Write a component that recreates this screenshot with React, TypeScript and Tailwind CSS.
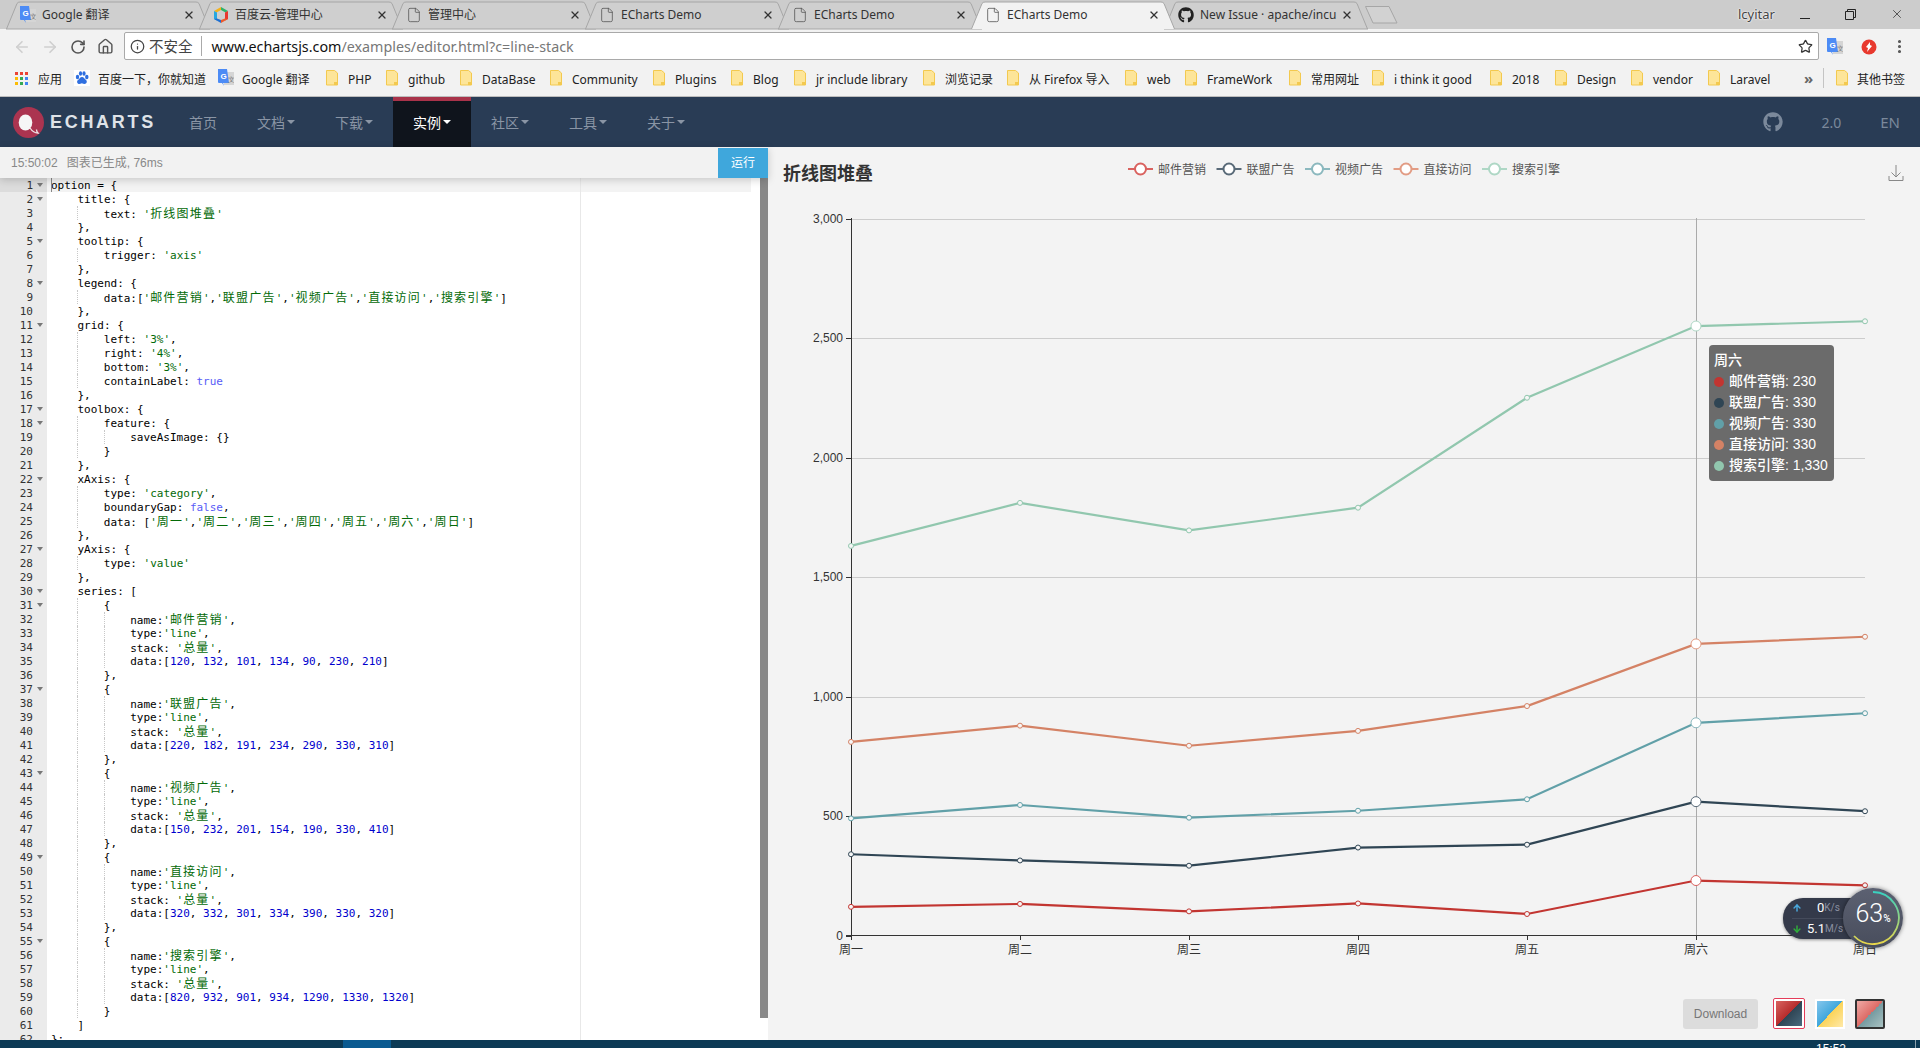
import { ArrowDown, ArrowLeft, ArrowRight, ArrowUp, File, Home, Info, MoreVertical, RotateCw, Star, X } from "lucide-react";
import { FaGithub } from "react-icons/fa";

const SANS = "font-['Noto_Sans','Noto_Sans_CJK_SC',sans-serif]";

const tabs = [
  { title: "Google 翻译", icon: "translate" },
  { title: "百度云-管理中心", icon: "cloud" },
  { title: "管理中心", icon: "file" },
  { title: "ECharts Demo", icon: "file" },
  { title: "ECharts Demo", icon: "file" },
  { title: "ECharts Demo", icon: "file", active: true },
  { title: "New Issue · apache/incu", icon: "github" },
];

const bookmarks = [
  { label: "PHP", cls: "w-[60px]" },
  { label: "github", cls: "w-[74px]" },
  { label: "DataBase", cls: "w-[90px]" },
  { label: "Community", cls: "w-[103px]" },
  { label: "Plugins", cls: "w-[78px]" },
  { label: "Blog", cls: "w-[63px]" },
  { label: "jr include library", cls: "w-[129px]" },
  { label: "浏览记录", cls: "w-[84px]" },
  { label: "从 Firefox 导入", cls: "w-[118px]" },
  { label: "web", cls: "w-[60px]" },
  { label: "FrameWork", cls: "w-[104px]" },
  { label: "常用网址", cls: "w-[83px]" },
  { label: "i think it good", cls: "w-[118px]" },
  { label: "2018", cls: "w-[65px]" },
  { label: "Design", cls: "w-[76px]" },
  { label: "vendor", cls: "w-[77px]" },
  { label: "Laravel", cls: "w-[96px]" },
];

const navItems = [
  { label: "文档" },
  { label: "下载" },
  { label: "实例", active: true },
  { label: "社区" },
  { label: "工具" },
  { label: "关于" },
];

const code = `option = {
    title: {
        text: '折线图堆叠'
    },
    tooltip: {
        trigger: 'axis'
    },
    legend: {
        data:['邮件营销','联盟广告','视频广告','直接访问','搜索引擎']
    },
    grid: {
        left: '3%',
        right: '4%',
        bottom: '3%',
        containLabel: true
    },
    toolbox: {
        feature: {
            saveAsImage: {}
        }
    },
    xAxis: {
        type: 'category',
        boundaryGap: false,
        data: ['周一','周二','周三','周四','周五','周六','周日']
    },
    yAxis: {
        type: 'value'
    },
    series: [
        {
            name:'邮件营销',
            type:'line',
            stack: '总量',
            data:[120, 132, 101, 134, 90, 230, 210]
        },
        {
            name:'联盟广告',
            type:'line',
            stack: '总量',
            data:[220, 182, 191, 234, 290, 330, 310]
        },
        {
            name:'视频广告',
            type:'line',
            stack: '总量',
            data:[150, 232, 201, 154, 190, 330, 410]
        },
        {
            name:'直接访问',
            type:'line',
            stack: '总量',
            data:[320, 332, 301, 334, 390, 330, 320]
        },
        {
            name:'搜索引擎',
            type:'line',
            stack: '总量',
            data:[820, 932, 901, 934, 1290, 1330, 1320]
        }
    ]
};`.split("\n");

const foldLines = [1, 2, 5, 8, 11, 17, 18, 22, 27, 30, 31, 37, 43, 49, 55];

const series = [
  { name: "邮件营销", color: "#c23531", faded: "#d9625f", values: [120, 132, 101, 134, 90, 230, 210], tip: "230" },
  { name: "联盟广告", color: "#2f4554", faded: "#596a78", values: [220, 182, 191, 234, 290, 330, 310], tip: "330" },
  { name: "视频广告", color: "#61a0a8", faded: "#8bb8be", values: [150, 232, 201, 154, 190, 330, 410], tip: "330" },
  { name: "直接访问", color: "#d48265", faded: "#e29c84", values: [320, 332, 301, 334, 390, 330, 320], tip: "330" },
  { name: "搜索引擎", color: "#91c7ae", faded: "#aed7c5", values: [820, 932, 901, 934, 1290, 1330, 1320], tip: "1,330" },
];

const days = ["周一", "周二", "周三", "周四", "周五", "周六", "周日"];
const ticks = [0, 500, 1000, 1500, 2000, 2500, 3000];

const xOf = (i: number) => 851 + i * 169;
const yOf = (v: number) => 935.5 - v * 0.239;

// stacked totals for each series
const stacked = series.map((s, idx) =>
  s.values.map((_, i) => series.slice(0, idx + 1).reduce((sum, row) => sum + row.values[i], 0))
);

function TranslateIcon() {
  return (
    <svg width="16" height="18" viewBox="0 0 16 18" className="shrink-0">
      <rect x="6" y="3" width="10" height="13" fill="#d5d5d5" />
      <path d="M0 0h9l2 14H5l1 3-2-3H1a1 1 0 0 1-1-1z" fill="#4c8bf5" />
      <text x="2.5" y="9.5" fontSize="8" fontWeight="700" fill="#fff" fontFamily="Liberation Sans">G</text>
      <text x="10" y="13" fontSize="7" fill="#777" fontFamily="Liberation Sans">文</text>
    </svg>
  );
}

function CloudIcon() {
  return (
    <svg width="16" height="18" viewBox="0 0 16 18" className="shrink-0">
      <path d="M8 1 15 5 12.5 6.5 8 4z" fill="#2fb36a" />
      <path d="M8 1 1 5 3.5 6.5 8 4z" fill="#f5b21a" />
      <path d="M1 5v8l3 1.5V6.5z" fill="#27a8e0" />
      <path d="M15 5v8l-3 1.5V6.5z" fill="#e8382f" />
      <path d="M1 13l7 4v-3l-4-1.5z" fill="#1f6fd1" />
      <path d="M15 13l-7 4v-3l4-1.5z" fill="#ec5a2c" />
    </svg>
  );
}

function Folder() {
  return (
    <svg width="12" height="16" viewBox="0 0 12 16" className="shrink-0">
      <path d="M.5.5h8l3 2.5v12H.5z" fill="#fde599" stroke="#f3c94f" />
      <rect x="8" y="12" width="3" height="3" fill="#f3c94f" />
    </svg>
  );
}

function AppsIcon() {
  const colors = ["#ea4335", "#ea4335", "#ea4335", "#fbbc05", "#34a853", "#4285f4", "#fbbc05", "#34a853", "#4285f4"];
  return (
    <div className="grid w-[13px] grid-cols-3 gap-[2px]">
      {colors.map((c, i) => (
        <svg key={i} width="3" height="3">
          <rect width="3" height="3" fill={c} />
        </svg>
      ))}
    </div>
  );
}

function BaiduIcon() {
  return (
    <svg width="16" height="16" viewBox="0 0 16 16" className="shrink-0">
      <rect width="16" height="16" fill="#fff" />
      <g fill="#2f6fe0">
        <ellipse cx="3.5" cy="7" rx="1.7" ry="2.2" />
        <ellipse cx="6.5" cy="3.5" rx="1.6" ry="2.2" />
        <ellipse cx="10" cy="3.5" rx="1.6" ry="2.2" />
        <ellipse cx="12.8" cy="7" rx="1.7" ry="2.2" />
        <path d="M8 7c2 0 2.5 2 4 3s.8 4-1.500 4-2.500-.7-2.500-.7-1 .7-2.800.7-3-2.500-1.200-4S6 7 8 7z" />
      </g>
    </svg>
  );
}

function Tab(props: { title: string; icon: string; active?: boolean; first: boolean }) {
  return (
    <div className={`relative flex h-[28px] w-[204px] shrink-0 items-center pl-[14px] pr-[15px] ${props.first ? "" : "-ml-[11px]"} ${props.active ? "z-10" : ""}`}>
      <svg width="204" height="29" viewBox="0 0 204 29" className="absolute left-0 top-0">
        <path
          d="M.5 28 11 2.500Q12 1 14 1H190q2 0 3 1.500L203.500 28"
          fill={props.active ? "#f2f2f2" : "#cfcfcf"}
          stroke="#a6a6a6"
        />
        {!props.active && <path d="M0 28H204" stroke="#a6a6a6" />}
      </svg>
      <div className="relative flex w-[22px] shrink-0 justify-start">
        {props.icon === "translate" && <TranslateIcon />}
        {props.icon === "cloud" && <CloudIcon />}
        {props.icon === "file" && <File size={16} strokeWidth={1.2} className="text-[#555]" />}
        {props.icon === "github" && <FaGithub size={16} className="text-[#222]" />}
      </div>
      <span className={`relative min-w-0 flex-1 overflow-hidden whitespace-nowrap text-[12px] text-[#333] ${SANS}`}>{props.title}</span>
      <X size={12} strokeWidth={2.6} className="relative ml-[2px] shrink-0 text-[#333]" />
    </div>
  );
}

function TabStrip() {
  return (
    <div className="relative flex h-[29px] items-end bg-[#cccccc]">
      <div className="flex h-[28px] pl-[6px]">
        {tabs.map((tab, i) => (
          <Tab key={i} first={i === 0} title={tab.title} icon={tab.icon} active={tab.active} />
        ))}
      </div>
      <svg width="36" height="20" viewBox="0 0 36 20" className="-ml-[3px] mb-[4px] shrink-0">
        <path d="M.5 1.500H24l8 16.500H8z" fill="#d2d2d2" stroke="#a6a6a6" strokeLinejoin="round" />
      </svg>
      <span className={`ml-[337px] mb-[5px] w-[42px] text-[13px] text-[#444] [text-shadow:0_0_2px_#fff,0_0_2px_#fff] ${SANS}`}>lcyitar</span>
      <div className="mb-[10px] ml-[20px] h-px w-[10px] bg-[#222]" />
      <svg width="11" height="11" viewBox="0 0 11 11" className="mb-[9px] ml-[35px]">
        <path d="M.5 2.500h8v8h-8zM2.500 2.500v-2h8v8h-2" fill="none" stroke="#222" />
      </svg>
      <X size={14} strokeWidth={1.2} className="mb-[8px] ml-[34px] text-[#222]" />
    </div>
  );
}

function AddressBar() {
  return (
    <div className="flex h-[31px] items-end bg-[#f2f2f2]">
      <div className="flex h-[27px] w-[124px] items-center pl-[13px]">
        <ArrowLeft size={18} strokeWidth={2.2} className="text-[#cfcfcf]" />
        <ArrowRight size={18} strokeWidth={2.2} className="ml-[10px] text-[#cfcfcf]" />
        <RotateCw size={16} strokeWidth={2.4} className="ml-[11px] text-[#555]" />
        <Home size={17} strokeWidth={2} className="ml-[11px] text-[#555]" />
      </div>
      <div className={`flex h-[28px] w-[1695px] items-center rounded-[2px] border border-[#a9a9a9] bg-white pl-[5px] pr-[5px] ${SANS}`}>
        <Info size={15} strokeWidth={2} className="text-[#444]" />
        <span className="ml-[4px] pt-px text-[14.500px] text-[#444]">不安全</span>
        <div className="ml-[8px] mr-[10px] h-[20px] w-px bg-[#aaa]" />
        <span className="whitespace-nowrap pt-px text-[14.300px] text-[#111]">
          www.echartsjs.com<span className="text-[#777]">/examples/editor.html?c=line-stack</span>
        </span>
        <Star size={15} strokeWidth={2} className="ml-auto text-[#333]" />
      </div>
      <div className="flex h-[27px] flex-1 items-center pl-[8px]">
        <TranslateIcon />
        <svg width="16" height="16" viewBox="0 0 16 16" className="ml-[18px]">
          <circle cx="8" cy="8" r="7.500" fill="#e8392e" />
          <path d="M9 3 5 8l2 1-1 4 5-6-2-1z" fill="#fff" />
        </svg>
        <MoreVertical size={17} strokeWidth={2.4} className="ml-[14px] text-[#555]" />
      </div>
    </div>
  );
}

function BookmarkBar() {
  return (
    <div className={`flex h-[37px] items-center border-b border-[#bdbdbd] bg-[#f2f2f2] pl-[15px] text-[12px] text-[#222] ${SANS}`}>
      <div className="flex w-[59px] items-center gap-[10px]">
        <AppsIcon />
        <span className="pt-[3px]">应用</span>
      </div>
      <div className="flex w-[144px] items-center gap-[8px]">
        <BaiduIcon />
        <span className="whitespace-nowrap pt-[3px]">百度一下，你就知道</span>
      </div>
      <div className="flex w-[108px] items-center gap-[8px]">
        <TranslateIcon />
        <span className="whitespace-nowrap pt-[3px]">Google 翻译</span>
      </div>
      {bookmarks.map((b) => (
        <div key={b.label} className={`flex shrink-0 items-center gap-[10px] ${b.cls}`}>
          <Folder />
          <span className="whitespace-nowrap pt-[3px]">{b.label}</span>
        </div>
      ))}
      <span className="w-[19px] pt-[1px] text-[15px] font-bold text-[#666]">»</span>
      <div className="h-[20px] w-px bg-[#c4c4c4]" />
      <div className="ml-[12px] flex items-center gap-[9px]">
        <Folder />
        <span className="whitespace-nowrap pt-[3px]">其他书签</span>
      </div>
    </div>
  );
}

function Logo() {
  return (
    <div className="flex w-[169px] shrink-0 items-center pl-[13px]">
      <svg width="31" height="31" viewBox="0 0 31 31" className="shrink-0">
        <circle cx="15.500" cy="15.500" r="15.500" fill="#ab3450" />
        <ellipse cx="12.500" cy="15.500" rx="6.800" ry="8" fill="#f6f6f6" />
        <path d="M17 21c2 3 4 5 8 5-1-1-1.500-2-1.500-3.500" fill="none" stroke="#f0e6e8" strokeWidth="1.300" />
      </svg>
      <span className="ml-[6px] font-['Liberation_Sans',sans-serif] text-[18px] font-bold leading-none tracking-[2.700px] text-[#dfe3e8]">ECHARTS</span>
    </div>
  );
}

function NavBar() {
  return (
    <div className={`flex h-[50px] shrink-0 bg-[#293c55] text-[14px] text-[#8a95a5] ${SANS}`}>
      <Logo />
      <div className="flex w-[68px] items-center justify-center">首页</div>
      {navItems.map((item) => (
        <div
          key={item.label}
          className={
            item.active
              ? "flex w-[78px] items-center justify-center border-t-4 border-[#a9334a] bg-[#0f141c] pb-[4px] text-white"
              : "flex w-[78px] items-center justify-center"
          }
        >
          {item.label}
          <span className="ml-[2px] h-0 w-0 border-x-[4px] border-t-[4px] border-x-transparent border-t-current" />
        </div>
      ))}
      <div className="ml-auto flex items-center pr-[20px] text-[#7b899b]">
        <FaGithub size={20} />
        <span className="ml-[38px]">2.0</span>
        <span className="ml-[39px] text-[15px]">EN</span>
      </div>
    </div>
  );
}

function CodeText(props: { text: string }) {
  const parts = props.text.split(/('[^']*'|\b\d+\b|\btrue\b|\bfalse\b)/);
  return (
    <>
      {parts.map((part, i) => {
        if (part.startsWith("'")) {
          return (
            <span key={i} className="text-[#036a07]">
              {part.split(/([\u4e00-\u9fff]+)/).map((seg, j) =>
                /[\u4e00-\u9fff]/.test(seg) ? (
                  <span key={j} className="font-['Noto_Sans_CJK_SC',sans-serif] text-[12px] leading-none tracking-[1.2px]">{seg}</span>
                ) : (
                  seg
                )
              )}
            </span>
          );
        }
        if (part === "true" || part === "false") return <span key={i} className="text-[#585cf6]">{part}</span>;
        if (/^\d+$/.test(part)) return <span key={i} className="text-[#0000cd]">{part}</span>;
        return <span key={i}>{part}</span>;
      })}
    </>
  );
}

function CodeLine(props: { line: string; active: boolean }) {
  const indent = props.line.length - props.line.trimStart().length;
  const guides = Math.floor(indent / 4);
  return (
    <div className={`flex h-[14px] whitespace-pre pl-[4px] ${props.active ? "bg-[#f3f3f3]" : ""}`}>
      {Array.from({ length: guides }).map((_, i) => (
        <span key={i} className={`h-[14px] w-[26.400px] shrink-0 ${i === 0 ? "" : "border-l border-dotted border-[#c8c8c8]"}`} />
      ))}
      <span className="pt-px"><CodeText text={props.line.trimStart()} /></span>
    </div>
  );
}

function Editor() {
  return (
    <div className="flex w-[768px] shrink-0 flex-col bg-white">
      <div className="z-10 flex h-[31px] shrink-0 bg-[#f2f2f2] shadow-[0_2px_8px_rgba(0,0,0,0.18)]">
        <span className="flex-1 self-center pl-[11px] font-['Liberation_Sans','Noto_Sans_CJK_SC',sans-serif] text-[12px] text-[#888]">
          15:50:02<span className="ml-[9px]">图表已生成, 76ms</span>
        </span>
        <button className={`mt-px h-[30px] w-[50px] bg-[#3fa7dc] text-[12px] text-white ${SANS}`}>运行</button>
      </div>
      <div className="flex min-h-0 flex-1 overflow-hidden font-['DejaVu_Sans_Mono',monospace] text-[11px] leading-[14px] text-black">
        <div className="w-[47px] shrink-0 bg-[#ebebeb] text-[#333]">
          {code.map((_, i) => (
            <div key={i} className={`flex h-[14px] items-center ${i === 0 ? "bg-[#dcdcdc]" : ""}`}>
              <span className="w-[33px] pt-px text-right text-[11px]">{i + 1}</span>
              {foldLines.includes(i + 1) && (
                <span className="ml-[4px] h-0 w-0 border-x-[3px] border-t-[4px] border-x-transparent border-t-[#777]" />
              )}
            </div>
          ))}
        </div>
        <div className="relative w-[713px] shrink-0">
          <div className="absolute bottom-0 left-[533px] top-0 w-px bg-[#e8e8e8]" />
          <div className="absolute left-[4px] top-0 h-[14px] w-px bg-[#888]" />
          {code.map((line, i) => (
            <div key={i} className={i === 0 ? "w-[704px]" : ""}>
              <CodeLine line={line} active={i === 0} />
            </div>
          ))}
        </div>
        <div className="h-[840px] w-2 shrink-0 bg-[#888]" />
      </div>
    </div>
  );
}

function Chart() {
  return (
    <svg viewBox="768 147 1152 893" width="1152" height="893" className="block font-['Liberation_Sans','Noto_Sans_CJK_SC',sans-serif]">
      <text x="783" y="180" fontSize="18" fontWeight="700" fill="#333">折线图堆叠</text>
      {series.map((s, i) => {
        const lx = 1128 + i * 88.500;
        return (
          <g key={s.name}>
            <path d={`M${lx} 169h25`} stroke={s.faded} strokeWidth="2" />
            <circle cx={lx + 12.500} cy="169" r="5.500" fill="#fff" stroke={s.faded} strokeWidth="2" />
            <text x={lx + 30} y="174" fontSize="12" fill="#555">{s.name}</text>
          </g>
        );
      })}
      <path d="M1889 176v4.500h14V176M1896 165v12M1891.500 172.500l4.500 4.500 4.500-4.500" fill="none" stroke="#888" strokeWidth="1" />

      {ticks.slice(1).map((t) => (
        <path key={t} d={`M851 ${Math.round(yOf(t)) + 0.5}H1865`} stroke="#ccc" />
      ))}
      <path d="M1696.500 218V935" stroke="#aaa" />
      <path d="M851.500 218V936M846 935.500H1865" stroke="#333" />
      {ticks.map((t) => (
        <g key={t}>
          <path d={`M846 ${Math.round(yOf(t)) + 0.5}h5`} stroke="#333" />
          <text x="843" y={yOf(t) + 4} fontSize="12" textAnchor="end" fill="#333">{t.toLocaleString("en-US")}</text>
        </g>
      ))}
      {days.map((d, i) => (
        <g key={d}>
          <path d={`M${xOf(i) + 0.5} 935v5`} stroke="#333" />
          <text x={xOf(i)} y="954" fontSize="12" textAnchor="middle" fill="#333">{d}</text>
        </g>
      ))}
      {series.map((s, idx) => (
        <g key={s.name}>
          <polyline points={stacked[idx].map((v, i) => `${xOf(i)},${yOf(v)}`).join(" ")} fill="none" stroke={s.color} strokeWidth="2.200" />
          {stacked[idx].map((v, i) => (
            <circle key={i} cx={xOf(i)} cy={yOf(v)} r={i === 5 ? 5 : 2.500} fill={i === 5 ? "#fff" : "#f6f6f6"} stroke={i === 5 ? s.faded : s.color} strokeWidth="1" />
          ))}
        </g>
      ))}
    </svg>
  );
}

function ChartTooltip() {
  return (
    <div className="absolute left-[941px] top-[198px] h-[136px] w-[125px] rounded-[4px] bg-[#6b6b6b] px-[5px] pt-[5px] font-['Liberation_Sans','Noto_Sans_CJK_SC',sans-serif] text-[14px] font-medium leading-[21px] text-white">
      <div>周六</div>
      {series.map((s) => (
        <div key={s.name} className="flex items-center whitespace-nowrap">
          <svg width="10" height="10" className="mr-[5px] shrink-0">
            <circle cx="5" cy="5" r="5" fill={s.color} />
          </svg>
          {s.name}: {s.tip}
        </div>
      ))}
    </div>
  );
}

function SpeedWidget() {
  return (
    <div className="absolute right-[18px] top-[741px] flex h-[60px] w-[119px] items-center font-['Roboto',sans-serif] text-[#ddd]">
      <div className="flex h-[41px] w-[75px] shrink-0 flex-col rounded-l-[20px] bg-[#343a4a] pl-[9px] text-[10px] shadow-[0_1px_3px_rgba(0,0,0,0.4)]">
        <div className="flex h-[21px] items-center border-b border-[#454b5b]">
          <ArrowUp size={10} strokeWidth={3.5} className="w-[10px] shrink-0 text-[#4aa8dc]" />
          <span className="ml-[15px] text-[13px] text-white">0</span>
          <span className="text-[#8b90a0]">K/s</span>
        </div>
        <div className="flex h-[20px] items-center">
          <ArrowDown size={10} strokeWidth={3.5} className="w-[10px] shrink-0 text-[#2fae3a]" />
          <span className="ml-[5px] text-[13px] text-white">5.1</span>
          <span className="text-[#8b90a0]">M/s</span>
        </div>
      </div>
      <div className="relative -ml-[15px] flex h-[60px] w-[60px] shrink-0 items-baseline justify-center rounded-full bg-[linear-gradient(180deg,#5c6172,#484d5c)] pt-[13px] text-white shadow-[0_0_4px_rgba(0,0,0,0.5)]">
        <svg width="60" height="60" viewBox="0 0 60 60" className="absolute left-0 top-0">
          <defs>
            <linearGradient id="ring" x1="0" y1="0" x2="0" y2="1">
              <stop offset="0" stopColor="#38d1c0" />
              <stop offset="1" stopColor="#e8d64a" />
            </linearGradient>
          </defs>
          <path d="M30 4A26 26 0 1 1 11 48" fill="none" stroke="url(#ring)" strokeWidth="1.800" />
        </svg>
        <span className="text-[25px] font-light leading-none">63</span>
        <span className="text-[10px] font-medium">%</span>
      </div>
    </div>
  );
}

function ChartPanel() {
  return (
    <div className="relative flex-1 overflow-hidden bg-[#f3f3f3]">
      <Chart />
      <ChartTooltip />
      <SpeedWidget />
      <div className="absolute bottom-[11px] right-[35px] flex items-center gap-[10px]">
        <button className="mr-[5px] h-[30px] w-[75px] rounded-[3px] bg-[#dcdcdc] font-['Liberation_Sans',sans-serif] text-[12px] text-[#777]">Download</button>
        <div className="h-[31px] w-[32px] rounded-[2px] border border-[#e43c59] bg-white p-[2px]">
          <div className="h-full w-full bg-[linear-gradient(135deg,#d9625f_0%,#b52c2c_50%,#2f4554_50%,#4a6a7e_100%)]" />
        </div>
        <div className="h-[30px] w-[30px] bg-white p-[2px]">
          <div className="h-full w-full bg-[linear-gradient(135deg,#85c6ec_0%,#3fa7dc_50%,#fbd45a_50%,#ffe9a8_100%)]" />
        </div>
        <div className="h-[30px] w-[30px] rounded-[2px] border-[2px] border-[#333]">
          <div className="h-full w-full bg-[linear-gradient(135deg,#efaaa6_0%,#dd6b66_50%,#759aa0_50%,#a9c2c2_100%)]" />
        </div>
      </div>
    </div>
  );
}

function Taskbar() {
  return (
    <div className="flex h-[8px] shrink-0 overflow-hidden bg-[#0c3a55]">
      <div className="ml-[343px] h-full w-[48px] bg-[#0a5a90]" />
      <span className="ml-[1425px] mt-[3px] font-['Liberation_Sans',sans-serif] text-[12px] leading-[12px] text-white">15:52</span>
      <div className="ml-[69px] h-full w-px bg-[#8aa0ad]" />
    </div>
  );
}

export default function App() {
  return (
    <div className="flex h-[1048px] w-[1920px] flex-col overflow-hidden bg-[#f2f2f2]">
      <TabStrip />
      <AddressBar />
      <BookmarkBar />
      <NavBar />
      <div className="flex min-h-0 flex-1">
        <Editor />
        <ChartPanel />
      </div>
      <Taskbar />
    </div>
  );
}
